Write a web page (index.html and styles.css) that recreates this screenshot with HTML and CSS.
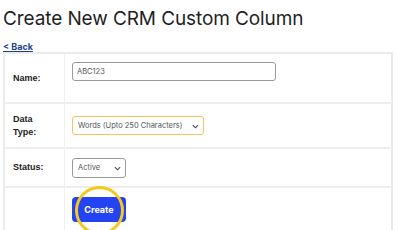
FILE: index.html
```
<!DOCTYPE html>
<html>
<head>
    <link rel="stylesheet" href="styles.css">
</head>
<body>
    <h1>Create New CRM Custom Column</h1>
    <a href="#" class="back-link">&lt; Back</a>

    <div class="form-table">
        <div class="label-cell row-name">Name:</div>
        <div class="field-cell row-name">
            <input type="text" class="text-input" value="ABC123">
        </div>

        <div class="label-cell row-type">Data<br>Type:</div>
        <div class="field-cell row-type">
            <div class="select-wrap">
                <select class="select-input type-select">
                    <option>Words (Upto 250 Characters)</option>
                </select>
                <svg class="chevron" viewBox="0 0 8 5" width="7" height="5"><path d="M1 1l3 3 3-3" fill="none" stroke="#444" stroke-width="1.2"/></svg>
            </div>
        </div>

        <div class="label-cell row-status">Status:</div>
        <div class="field-cell row-status">
            <div class="select-wrap">
                <select class="select-input status-select">
                    <option>Active</option>
                </select>
                <svg class="chevron" viewBox="0 0 8 5" width="7" height="5"><path d="M1 1l3 3 3-3" fill="none" stroke="#444" stroke-width="1.2"/></svg>
            </div>
        </div>

        <div class="label-cell row-submit last"></div>
        <div class="field-cell row-submit last">
            <div class="button-wrap">
                <button class="create-btn">Create</button>
                <span class="highlight-ring"></span>
            </div>
        </div>
    </div>
</body>
</html>
```

FILE: styles.css
```
body {
    margin: 0;
    padding: 7px 6px 0 3px;
    font-family: Inter, "Liberation Sans", Arial, sans-serif;
    color: #222;
    background: #fff;
}

h1 {
    margin: 0;
    font-size: 19px;
    font-weight: 400;
    line-height: 24px;
    letter-spacing: -0.1px;
    color: #1f1f1f;
}

.back-link {
    display: block;
    margin-top: 10px;
    font-size: 9px;
    font-weight: 700;
    line-height: 11px;
    color: #1d3f8f;
}

.form-table {
    display: grid;
    grid-template-columns: 60px 1fr;
    border: 2px solid #ebebeb;
    border-bottom-width: 1px;
}

.label-cell,
.field-cell {
    display: flex;
    align-items: center;
    border-bottom: 2px solid #eeeeee;
}

.label-cell {
    padding-left: 8px;
    font-family: "Liberation Sans", Arial, sans-serif;
    font-size: 9px;
    font-weight: 700;
    line-height: 13px;
    border-right: 1px solid #efefef;
}

.field-cell {
    padding-left: 7px;
}

.last {
    border-bottom: none;
}

.row-name { height: 48px; }
.row-type { height: 43px; }
.row-status { height: 37px; }
.row-submit { height: 42px; }

.text-input {
    box-sizing: border-box;
    width: 204px;
    height: 19px;
    margin-top: -14px;
    padding: 0 4px;
    border: 1px solid #9a9a9a;
    border-radius: 3px;
    font-family: inherit;
    font-size: 7.5px;
    color: #555;
}

.select-wrap {
    position: relative;
    display: flex;
}

.select-input {
    box-sizing: border-box;
    height: 19px;
    padding: 0 0 0 5px;
    border-radius: 3px;
    background: #fff;
    font-family: inherit;
    font-size: 7.5px;
    color: #555;
    appearance: none;
    -webkit-appearance: none;
}

.chevron {
    position: absolute;
    right: 5px;
    top: 50%;
    margin-top: -2px;
    pointer-events: none;
}

.type-select {
    width: 132px;
    border: 1px solid #f2c461;
}

.status-select {
    width: 54px;
    height: 20px;
    border: 1px solid #9a9a9a;
}

.button-wrap {
    position: relative;
}

.create-btn {
    width: 54px;
    height: 25px;
    padding: 0;
    border: none;
    border-radius: 4px;
    background-color: #2443f2;
    color: #fff;
    font-family: inherit;
    font-size: 9px;
    font-weight: 700;
    cursor: pointer;
}

.highlight-ring {
    position: absolute;
    left: 3px;
    top: -11px;
    width: 43px;
    height: 43px;
    border: 3px solid #f6c81c;
    border-radius: 50%;
    pointer-events: none;
}
```
